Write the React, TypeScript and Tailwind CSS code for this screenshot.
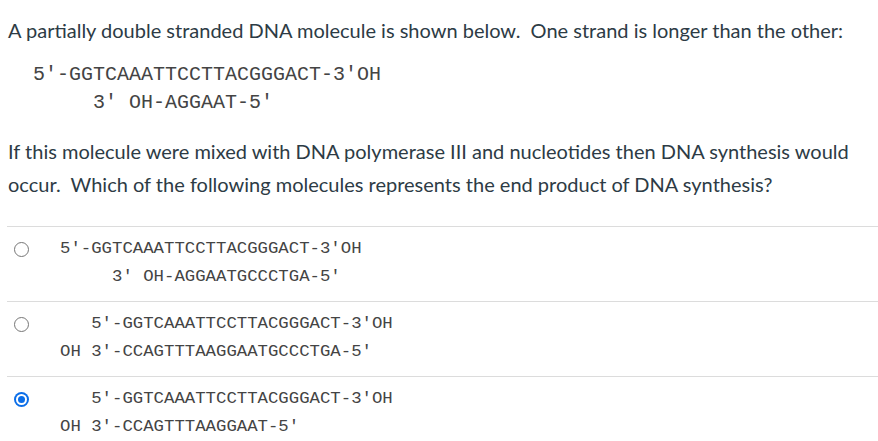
type Option = { lines: string[]; checked?: boolean };

const options: Option[] = [
  {
    lines: [
      "5′-GGTCAAATTCCTTACGGGACT-3′OH",
      "     3′ OH-AGGAATGCCCTGA-5'",
    ],
  },
  {
    lines: [
      "   5′-GGTCAAATTCCTTACGGGACT-3′OH",
      "OH 3'-CCAGTTTAAGGAATGCCCTGA-5′",
    ],
  },
  {
    lines: [
      "   5′-GGTCAAATTCCTTACGGGACT-3′OH",
      "OH 3'-CCAGTTTAAGGAAT-5′",
    ],
    checked: true,
  },
];

const Radio = ({ checked }: { checked?: boolean }) =>
  checked ? (
    <span className="flex h-[15px] w-[15px] items-center justify-center rounded-full bg-[#0b6ee8]">
      <span className="h-[11px] w-[11px] rounded-full bg-white p-[2px]">
        <span className="block h-full w-full rounded-full bg-[#0b6ee8]" />
      </span>
    </span>
  ) : (
    <span className="block h-[15px] w-[15px] rounded-full border border-[#767676] bg-white" />
  );

export default function App() {
  return (
    <div className="h-[441px] w-[878px] overflow-hidden bg-white font-['Lato','Noto_Sans',sans-serif] text-[#2d3b45]">
      <div className="pl-2 pt-4">
        <p className="text-[20px] leading-[28px] whitespace-pre">
          A partially double stranded DNA molecule is shown below.  One strand is longer than the other:
        </p>
        <pre className="mt-[17px] pl-[25px] font-['Liberation_Mono','Courier_New',monospace] text-[20px] leading-[28px] text-[#444]">
          {"5′-GGTCAAATTCCTTACGGGACT-3′OH\n     3′ OH-AGGAAT-5′"}
        </pre>
        <p className="mt-[18px] text-[20px] leading-[33px] whitespace-pre-wrap">
          {"If this molecule were mixed with DNA polymerase III and nucleotides then DNA synthesis would occur.  Which of the following molecules represents the end product of DNA synthesis?"}
        </p>
      </div>
      <div className="ml-[7px] mt-[25px]">
        {options.map((o, i) => (
          <div key={i} className="flex border-t border-[#dcdcdc] pt-[8px] pb-[10px]">
            <div className="flex h-[28px] w-[53px] items-center pl-[7px]">
              <Radio checked={o.checked} />
            </div>
            <pre className="font-['Liberation_Mono','Courier_New',monospace] text-[17.33px] leading-[28px] text-[#444]">
              {o.lines.join("\n")}
            </pre>
          </div>
        ))}
      </div>
    </div>
  );
}
